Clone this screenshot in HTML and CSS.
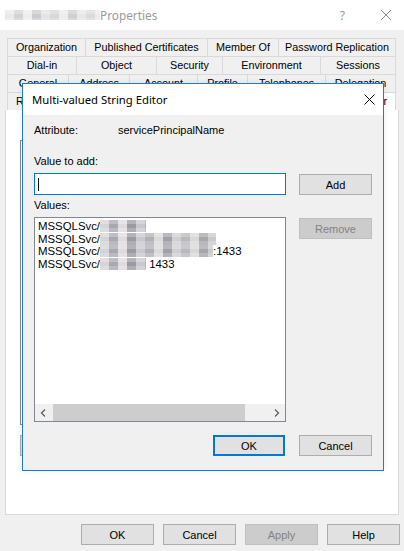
FILE: index.html
```html
<!DOCTYPE html>
<html>
<head>
<meta charset="utf-8">
<link rel="stylesheet" href="styles.css">
</head>
<body>
<div class="window">
  <div class="titlebar">
    <span class="mosaic mosaic-title"></span>
    <span class="title-text">Properties</span>
    <span class="spacer"></span>
    <span class="help-glyph">?</span>
    <svg class="title-close" width="12" height="12" viewBox="0 0 12 12"><path d="M1 1L11 11M11 1L1 11" stroke="#8a8a8a" stroke-width="1" fill="none"/></svg>
  </div>

  <div class="tabs">
    <div class="tabrow r1">
      <div class="tab">Organization</div>
      <div class="tab">Published Certificates</div>
      <div class="tab">Member Of</div>
      <div class="tab">Password Replication</div>
    </div>
    <div class="tabrow r2">
      <div class="tab">Dial-in</div>
      <div class="tab">Object</div>
      <div class="tab">Security</div>
      <div class="tab">Environment</div>
      <div class="tab">Sessions</div>
    </div>
    <div class="tabrow r3">
      <div class="tab">General</div>
      <div class="tab">Address</div>
      <div class="tab">Account</div>
      <div class="tab">Profile</div>
      <div class="tab">Telephones</div>
      <div class="tab">Delegation</div>
    </div>
    <div class="tabrow r4">
      <div class="tab">Remote control</div>
      <div class="tab">Remote Desktop Services Profile</div>
      <div class="tab">COM+</div>
      <div class="tab selected">Attribute Editor</div>
    </div>
  </div>

  <div class="page">
    <div class="bg-list"></div>
    <div class="bg-btn"></div>
  </div>

  <div class="footer">
    <button class="btn">OK</button>
    <button class="btn">Cancel</button>
    <button class="btn disabled">Apply</button>
    <button class="btn">Help</button>
  </div>

  <div class="dialog">
    <div class="dlg-title">
      <span class="dlg-title-text">Multi-valued String Editor</span>
      <svg class="dlg-close" width="11" height="11" viewBox="0 0 11 11"><path d="M0.5 0.5L10.5 10.5M10.5 0.5L0.5 10.5" stroke="#000" stroke-width="1" fill="none"/></svg>
    </div>
    <div class="dlg-body">
      <div class="attr-row">
        <span class="attr-label">Attribute:</span>
        <span class="attr-value">servicePrincipalName</span>
      </div>
      <div class="lbl lbl-add">Value to add:</div>
      <div class="input-row">
        <div class="input"><span class="caret"></span></div>
        <button class="btn side">Add</button>
      </div>
      <div class="lbl lbl-values">Values:</div>
      <div class="list-row">
        <div class="listbox">
          <div class="items">
            <div class="item">MSSQLSvc/<span class="mosaic m1"></span></div>
            <div class="item">MSSQLSvc/<span class="mosaic m2"></span></div>
            <div class="item">MSSQLSvc/<span class="mosaic m3"></span>:1433</div>
            <div class="item">MSSQLSvc/<span class="mosaic m4"></span> 1433</div>
          </div>
          <div class="hscroll">
            <div class="arrow"><svg width="7" height="8" viewBox="0 0 7 8"><path d="M5 0.5L1.5 4L5 7.5" stroke="#606060" stroke-width="1.3" fill="none"/></svg></div>
            <div class="track"><div class="thumb"></div></div>
            <div class="arrow"><svg width="7" height="8" viewBox="0 0 7 8"><path d="M2 0.5L5.5 4L2 7.5" stroke="#606060" stroke-width="1.3" fill="none"/></svg></div>
          </div>
        </div>
        <div class="side-col">
          <button class="btn side disabled">Remove</button>
        </div>
      </div>
      <div class="dlg-buttons">
        <button class="btn default">OK</button>
        <button class="btn side">Cancel</button>
      </div>
    </div>
  </div>
</div>
</body>
</html>
```
FILE: styles.css
```css
* { box-sizing: border-box; }
html, body { margin: 0; padding: 0; }
body {
  width: 404px;
  height: 551px;
  overflow: hidden;
  background: #f0f0f0;
  font-family: "Liberation Sans", Arial, sans-serif;
  font-size: 11px;
  color: #000;
}
.window {
  position: relative;
  width: 404px;
  height: 551px;
}
.titlebar {
  height: 30px;
  background: #ffffff;
  display: flex;
  align-items: center;
  padding: 0 12px 0 5px;
}
.title-text {
  font-family: "Noto Sans", sans-serif;
  font-size: 11.8px;
  color: #9a9a9a;
}
.spacer { flex: 1; }
.help-glyph {
  font-family: "Noto Sans", sans-serif;
  font-size: 12px;
  color: #9a9a9a;
  margin-right: 35px;
}
.title-close { display: block; }

.mosaic {
  display: inline-block;
  vertical-align: middle;
  height: 12px;
  background-image:
    linear-gradient(180deg, rgba(255,255,255,0.25) 0 4px, rgba(0,0,0,0) 4px 8px, rgba(255,255,255,0.2) 8px 12px),
    linear-gradient(90deg, #d4d4d6 0 9px, #a8a8b0 9px 18px, #e0dade 18px 27px, #9a9aa2 27px 36px, #c8c8ce 36px 45px, #b0b0b6 45px 54px, #dadada 54px 63px, #a0a0a8 63px 72px, #cfcfd2 72px 81px, #b8b8be 81px 90px, #d8d8d8 90px 99px, #a6a6ac 99px 108px, #cacaca 108px 117px, #bdbdc2 117px 126px);
}
.mosaic-title { width: 95px; height: 10px; opacity: 0.5; }
.m1 { width: 46px; }
.m2 { width: 116px; }
.m3 { width: 113px; }
.m4 { width: 46px; }

.tabs {
  margin-top: 8px;
  padding: 0 8px 0 7px;
}
.tabrow {
  display: grid;
  height: 18px;
}
.r1 { grid-template-columns: 78px 122px 71px 1fr; }
.r2 { grid-template-columns: 69px 80px 66px 98px 1fr; }
.r3 { grid-template-columns: 61px 61px 68px 50px 78px 1fr; }
.r4 { grid-template-columns: 84px 172px 44px 1fr; }
.tab {
  border-top: 1px solid #d9d9d9;
  border-left: 1px solid #d9d9d9;
  background: #f0f0f0;
  font-size: 10.8px;
  line-height: 16px;
  text-align: center;
  white-space: nowrap;
}
.tab:last-child { border-right: 1px solid #d9d9d9; }
.tab.selected { background: #ffffff; }
.r4 .tab:first-child { text-align: left; padding-left: 8px; }

.page {
  position: relative;
  margin: 0 5px;
  height: 405px;
  background: #ffffff;
  border: 1px solid #d9d9d9;
  border-top: none;
}
.bg-list {
  position: absolute;
  left: 14px;
  top: 30px;
  width: 340px;
  height: 285px;
  border: 1px solid #828790;
}
.bg-btn {
  position: absolute;
  left: 14px;
  top: 325px;
  width: 72px;
  height: 21px;
  border: 1px solid #adadad;
  background: #e1e1e1;
}

.footer {
  display: flex;
  justify-content: flex-end;
  gap: 9px;
  padding: 9px 4px 0 0;
}
.btn {
  width: 73px;
  height: 21px;
  border: 1px solid #adadad;
  background: #e1e1e1;
  font-family: "Liberation Sans", Arial, sans-serif;
  font-size: 11px;
  color: #000;
  padding: 0;
  margin: 0;
}
.btn.disabled {
  background: #cccccc;
  border-color: #bfbfbf;
  color: #838383;
}
.btn.default {
  border: 1px solid #0078d7;
  box-shadow: inset 0 0 0 1px #0078d7;
  width: 72px;
}

.dialog {
  position: absolute;
  left: 22px;
  top: 83px;
  width: 362px;
  height: 388px;
  border: 1px solid #1b7dd2;
  background: #f0f0f0;
  display: flex;
  flex-direction: column;
  box-shadow: 0 0 6px rgba(0,0,0,0.08);
}
.dlg-title {
  height: 31px;
  background: #ffffff;
  display: flex;
  align-items: center;
  justify-content: space-between;
  padding: 0 8px 0 9px;
}
.dlg-title-text {
  font-family: "Noto Sans", sans-serif;
  font-size: 11.3px;
  color: #000;
}
.dlg-close { display: block; }

.dlg-body {
  padding: 9px 11px 0 11px;
  display: flex;
  flex-direction: column;
}
.attr-row {
  display: flex;
  line-height: 13px;
}
.attr-label { width: 84px; }
.lbl { line-height: 13px; }
.lbl-add { margin-top: 18px; }
.input-row {
  display: flex;
  align-items: flex-start;
  margin-top: 5px;
}
.input {
  width: 252px;
  height: 22px;
  background: #ffffff;
  border: 1px solid #0078d7;
  padding: 4px 0 0 3px;
}
.caret {
  display: block;
  width: 1px;
  height: 13px;
  background: #000;
}
.input-row .btn { margin-left: 13px; margin-top: 1px; }
.lbl-values { margin-top: 4px; }
.list-row {
  display: flex;
  align-items: flex-start;
  margin-top: 5px;
}
.listbox {
  width: 253px;
  height: 205px;
  background: #ffffff;
  border: 1px solid #828790;
  display: flex;
  flex-direction: column;
}
.items {
  flex: 1;
  padding: 2px 3px;
  font-size: 11.4px;
  line-height: 12.6px;
  white-space: nowrap;
  overflow: hidden;
}
.item .mosaic { height: 12px; vertical-align: -2px; }
.hscroll {
  height: 17px;
  display: flex;
  background: #f0f0f0;
}
.arrow {
  width: 17px;
  display: flex;
  align-items: center;
  justify-content: center;
}
.track {
  flex: 1;
  display: flex;
  align-items: stretch;
  padding: 0 23px 0 1px;
}
.thumb {
  flex: 1;
  background: #cdcdcd;
}
.side-col {
  margin-left: 13px;
  padding-top: 1px;
}
.dlg-buttons {
  display: flex;
  justify-content: flex-end;
  gap: 14px;
  margin-top: 13px;
}
```
